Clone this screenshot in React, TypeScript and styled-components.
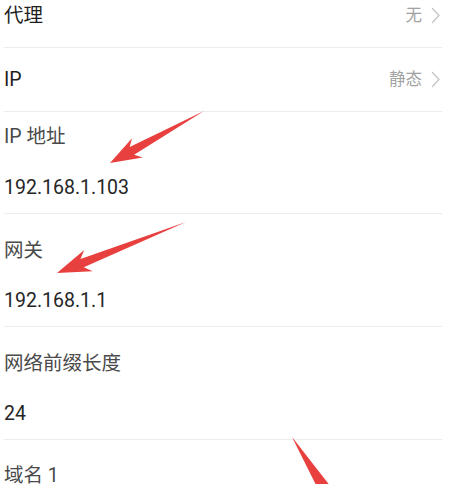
import React from 'react';
import styled, { createGlobalStyle } from 'styled-components';

const GlobalStyle = createGlobalStyle`
  html, body {
    margin: 0;
    padding: 0;
    background: #ffffff;
  }
  body {
    font-family: Roboto, "Noto Sans CJK SC", "Noto Sans", sans-serif;
    -webkit-font-smoothing: antialiased;
  }
`;

const Page = styled.div`
  position: relative;
  width: 474px;
  height: 484px;
  overflow: hidden;
  background: #ffffff;
`;

const List = styled.div`
  margin-top: -16px;
  padding-left: 4px;
  width: 438px;
`;

const NavRow = styled.div`
  height: 63px;
  display: flex;
  align-items: center;
  justify-content: space-between;
  border-bottom: 1px solid #ececec;
`;

const Title = styled.span`
  font-size: 19.5px;
  color: #1e1e1e;
  line-height: 28px;
`;

const Trail = styled.span`
  display: flex;
  align-items: center;
  gap: 9px;
  padding-right: 2px;
`;

const TrailValue = styled.span`
  font-size: 16.5px;
  color: #a2a2a2;
  line-height: 24px;
`;

const FieldRow = styled.div<{ $top: number; $gap: number }>`
  display: flex;
  flex-direction: column;
  gap: ${(props) => props.$gap}px;
  padding-top: ${(props) => props.$top}px;
  padding-bottom: 11px;
  border-bottom: 1px solid #ececec;
`;

const Label = styled.span`
  font-size: 19.5px;
  color: #4a4a4a;
  line-height: 28px;
`;

const Value = styled.span`
  font-size: 19.5px;
  color: #262626;
  line-height: 28px;
`;

const Overlay = styled.svg`
  position: absolute;
  top: 0;
  left: 0;
  pointer-events: none;
`;

const Chevron = () => (
  <svg width="9" height="17" viewBox="0 0 9 17">
    <polyline points="1,1 8,8.5 1,16" fill="none" stroke="#c4c4c4" strokeWidth="1.3" />
  </svg>
);

type Pt = [number, number];

// tapered hand-drawn arrow: thin tail widening to a swept-back head
const arrowPoints = (tail: Pt, tip: Pt, head: number, headHalf: number, shaftHalf: number) => {
  const dx = tip[0] - tail[0];
  const dy = tip[1] - tail[1];
  const len = Math.hypot(dx, dy);
  const ux = dx / len;
  const uy = dy / len;
  const nx = -uy;
  const ny = ux;
  const bx = tip[0] - ux * head;
  const by = tip[1] - uy * head;
  const back = head * 0.25;
  const pts: Pt[] = [
    tail,
    [bx + nx * shaftHalf, by + ny * shaftHalf],
    [bx - ux * back + nx * headHalf, by - uy * back + ny * headHalf],
    tip,
    [bx - ux * back - nx * headHalf, by - uy * back - ny * headHalf],
    [bx - nx * shaftHalf, by - ny * shaftHalf],
  ];
  return pts.map((p) => `${p[0].toFixed(1)},${p[1].toFixed(1)}`).join(' ');
};

const Arrows = () => (
  <Overlay width="474" height="484" viewBox="0 0 474 484">
    <polygon points={arrowPoints([204, 111], [110, 163], 25, 11, 4.5)} fill="#e8403f" />
    <polygon points={arrowPoints([186, 222], [57, 273], 27, 11.5, 4.5)} fill="#e8403f" />
    <polygon points={arrowPoints([292, 437], [352, 532], 32, 14, 8)} fill="#e8403f" />
  </Overlay>
);

const App = () => (
  <>
    <GlobalStyle />
    <Page>
      <List>
        <NavRow>
          <Title>代理</Title>
          <Trail>
            <TrailValue>无</TrailValue>
            <Chevron />
          </Trail>
        </NavRow>
        <NavRow>
          <Title>IP</Title>
          <Trail>
            <TrailValue>静态</TrailValue>
            <Chevron />
          </Trail>
        </NavRow>
        <FieldRow $top={11} $gap={23}>
          <Label>IP 地址</Label>
          <Value>192.168.1.103</Value>
        </FieldRow>
        <FieldRow $top={23} $gap={22}>
          <Label>网关</Label>
          <Value>192.168.1.1</Value>
        </FieldRow>
        <FieldRow $top={23} $gap={22}>
          <Label>网络前缀长度</Label>
          <Value>24</Value>
        </FieldRow>
        <FieldRow $top={22} $gap={22}>
          <Label>域名 1</Label>
        </FieldRow>
      </List>
      <Arrows />
    </Page>
  </>
);

export default App;
